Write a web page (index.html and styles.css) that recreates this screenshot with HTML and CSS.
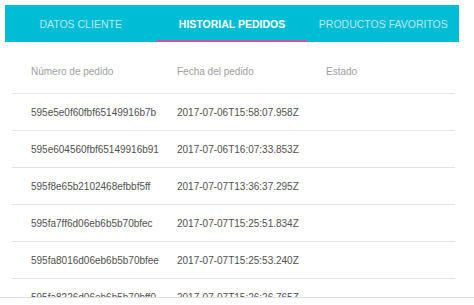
FILE: index.html
```html
<!DOCTYPE html>
<html lang="es">
<head>
<meta charset="utf-8">
<link rel="stylesheet" href="styles.css">
</head>
<body>
<div class="viewport">
  <div class="page">
    <nav class="tabs">
      <div class="tab">DATOS CLIENTE</div>
      <div class="tab active">HISTORIAL PEDIDOS</div>
      <div class="tab">PRODUCTOS FAVORITOS</div>
    </nav>
    <div class="table">
      <div class="row head">
        <div class="cell">Número de pedido</div>
        <div class="cell">Fecha del pedido</div>
        <div class="cell">Estado</div>
      </div>
      <div class="row"><div class="cell">595e5e0f60fbf65149916b7b</div><div class="cell">2017-07-06T15:58:07.958Z</div><div class="cell"></div></div>
      <div class="row"><div class="cell">595e604560fbf65149916b91</div><div class="cell">2017-07-06T16:07:33.853Z</div><div class="cell"></div></div>
      <div class="row"><div class="cell">595f8e65b2102468efbbf5ff</div><div class="cell">2017-07-07T13:36:37.295Z</div><div class="cell"></div></div>
      <div class="row"><div class="cell">595fa7ff6d06eb6b5b70bfec</div><div class="cell">2017-07-07T15:25:51.834Z</div><div class="cell"></div></div>
      <div class="row"><div class="cell">595fa8016d06eb6b5b70bfee</div><div class="cell">2017-07-07T15:25:53.240Z</div><div class="cell"></div></div>
      <div class="row"><div class="cell">595fa8226d06eb6b5b70bff0</div><div class="cell">2017-07-07T15:26:26.765Z</div><div class="cell"></div></div>
    </div>
  </div>
</div>
<footer class="footer"></footer>
</body>
</html>
```
FILE: styles.css
```css
html, body {
  margin: 0;
  padding: 0;
  background: #fff;
  font-family: "Liberation Sans", Arial, sans-serif;
  overflow: hidden;
}
.viewport {
  height: 297px;
  overflow: hidden;
}
.page {
  padding: 5px 15px 0 5px;
}
.tabs {
  display: flex;
  height: 37px;
  background: #00bcd4;
}
.tab {
  flex: 1;
  display: flex;
  align-items: center;
  justify-content: center;
  font-size: 10.5px;
  color: rgba(255, 255, 255, 0.72);
  padding-top: 1px;
}
.tab.active {
  color: #fff;
  font-weight: bold;
  box-shadow: inset 0 -2px 0 #d24ea6;
}
.table {
  margin: 8px 4px 0 7px;
}
.row {
  display: grid;
  grid-template-columns: 146px 149px 1fr;
  height: 36px;
  align-items: center;
  border-bottom: 1px solid #e4e4e4;
  padding-left: 19px;
  font-size: 10px;
  color: #505050;
}
.row.head {
  height: 43px;
  color: #9e9e9e;
}
.footer {
  border-top: 1px solid #e0e0e0;
  height: 8px;
}
```
